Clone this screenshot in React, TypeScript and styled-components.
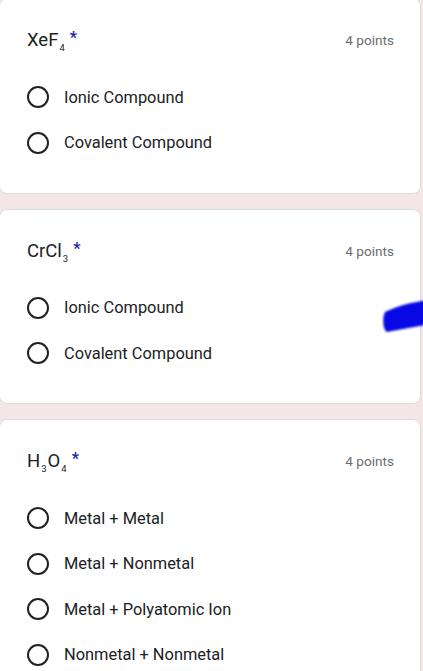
import styled, { createGlobalStyle } from 'styled-components';

const GlobalStyle = createGlobalStyle`
  html, body {
    margin: 0;
    padding: 0;
    background: #f4e5e9;
    font-family: Roboto, "Noto Sans", Arial, sans-serif;
    overflow: hidden;
  }
`;

const Page = styled.div`
  position: relative;
  width: 423px;
  height: 671px;
  overflow: hidden;
  background: #f4e5e9;
`;

const List = styled.div`
  display: flex;
  flex-direction: column;
  gap: 15px;
  margin-top: -2px;
  padding-right: 2px;
`;

const Card = styled.section`
  background: #ffffff;
  border: 1px solid #dedbdd;
  border-radius: 8px;
  padding: 30px 26px 38px 27px;
  margin-left: -1px;
`;

const Header = styled.div`
  display: flex;
  align-items: center;
  justify-content: space-between;
  height: 22px;
  margin-bottom: 34px;
`;

const Title = styled.div`
  font-size: 18.5px;
  color: #202124;
  line-height: 20px;
  display: flex;
  align-items: flex-start;
`;

const Sub = styled.sub`
  font-size: 9.5px;
  vertical-align: baseline;
  position: relative;
  top: 8px;
  margin: 0 1px;
`;

const Required = styled.span`
  color: #1f1fa8;
  font-size: 16px;
  font-weight: 700;
  margin-left: 4px;
  line-height: 16px;
`;

const Points = styled.span`
  font-size: 13.6px;
  color: #6a6d70;
`;

const Options = styled.div`
  display: flex;
  flex-direction: column;
  gap: 21.5px;
`;

const Option = styled.label`
  display: flex;
  align-items: center;
  gap: 15px;
  height: 24px;
  font-size: 16.4px;
  color: #202124;
`;

const Radio = styled.span`
  width: 22px;
  height: 22px;
  box-sizing: border-box;
  border: 2.5px solid #202124;
  border-radius: 50%;
  flex-shrink: 0;
`;

const Smudge = styled.svg`
  position: absolute;
  left: 379px;
  top: 296px;
  filter: blur(1.3px);
`;

type Question = {
  title: React.ReactNode;
  options: string[];
};

const questions: Question[] = [
  {
    title: <>XeF<Sub>4</Sub></>,
    options: ['Ionic Compound', 'Covalent Compound'],
  },
  {
    title: <>CrCl<Sub>3</Sub></>,
    options: ['Ionic Compound', 'Covalent Compound'],
  },
  {
    title: <>H<Sub>3</Sub>O<Sub>4</Sub></>,
    options: ['Metal + Metal', 'Metal + Nonmetal', 'Metal + Polyatomic Ion', 'Nonmetal + Nonmetal'],
  },
];

export default function App() {
  return (
    <Page>
      <GlobalStyle />
      <List>
        {questions.map((q, idx) => (
          <Card key={idx}>
            <Header>
              <Title>
                {q.title}
                <Required>*</Required>
              </Title>
              <Points>4 points</Points>
            </Header>
            <Options>
              {q.options.map((opt) => (
                <Option key={opt}>
                  <Radio />
                  {opt}
                </Option>
              ))}
            </Options>
          </Card>
        ))}
      </List>
      <Smudge width="46" height="42" viewBox="0 0 46 42">
        <path d="M6 16 C14 12 28 7 43 5 L46 5 L46 29 C34 31 20 34 8 36 C4 34 3 22 6 16 Z" fill="#0808e4" />
      </Smudge>
    </Page>
  );
}
